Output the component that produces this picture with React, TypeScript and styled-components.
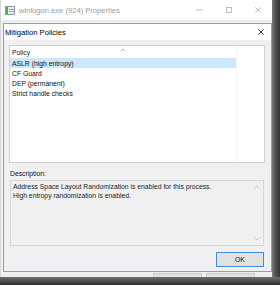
import React from "react";
import styled, { createGlobalStyle } from "styled-components";

const Global = createGlobalStyle`
  html, body { margin: 0; padding: 0; }
  body { font-family: "Liberation Sans", Arial, sans-serif; }
  * { box-sizing: border-box; }
`;

const Screen = styled.div`
  width: 280px;
  height: 285px;
  overflow: hidden;
  background: linear-gradient(to right, #7a7a7a 0px, #7a7a7a 272px, #555 275px, #333 280px);
`;

const BottomShade = styled.div`
  height: 8px;
  background: linear-gradient(to bottom, #707070, #2a2a2a);
`;

const OuterWindow = styled.div`
  width: 272px;
  height: 277px;
  background: #f0f0f0;
  display: flex;
  flex-direction: column;
  overflow: hidden;
  border-left: 1px solid #d8d8d8;
`;

const OuterTitleBar = styled.div`
  height: 21px;
  flex: none;
  background: #fff;
  display: flex;
  align-items: center;
  padding-left: 4px;
  border-bottom: 1px solid #e6e6e6;
`;

const OuterTitle = styled.span`
  font-size: 7.6px;
  color: #9c9c9c;
  margin-left: 4px;
  flex: 1;
  white-space: nowrap;
`;

const CaptionButtons = styled.div`
  display: flex;
  align-items: center;
  height: 100%;
`;

const CaptionButton = styled.div`
  width: 29px;
  height: 100%;
  display: flex;
  align-items: center;
  justify-content: center;
`;

const OuterBody = styled.div`
  flex: 1;
  display: flex;
  flex-direction: column;
  padding: 2px 0 0 2px;
`;

const Dialog = styled.div`
  width: 269px;
  height: 249px;
  flex: none;
  border: 1px solid #6fa7e0;
  background: #f0f0f0;
  display: flex;
  flex-direction: column;
`;

const DialogTitleBar = styled.div`
  height: 16px;
  flex: none;
  background: #fff;
  display: flex;
  align-items: center;
  justify-content: space-between;
  padding: 0 7px 0 1px;
`;

const DialogTitle = styled.span`
  font-size: 7.6px;
  color: #000;
  white-space: nowrap;
`;

const DialogBody = styled.div`
  flex: 1;
  display: flex;
  flex-direction: column;
  padding: 5px 6px 7px 5px;
`;

const ListBox = styled.div`
  height: 118px;
  flex: none;
  background: #fff;
  border: 1px solid #cfcfcf;
  display: flex;
  flex-direction: column;
  position: relative;
`;

const ColumnLine = styled.div`
  position: absolute;
  top: 0;
  bottom: 0;
  left: 226px;
  width: 1px;
  background: #f4f4f4;
`;

const HeaderRow = styled.div`
  height: 12px;
  width: 226px;
  display: flex;
  align-items: center;
  padding-left: 2px;
  position: relative;
`;

const HeaderText = styled.span`
  font-size: 6.8px;
  color: #1a1a1a;
`;

const SortArrow = styled.svg`
  position: absolute;
  left: 110px;
  top: 2px;
`;

const Row = styled.div<{ $selected?: boolean }>`
  height: 10px;
  width: 226px;
  display: flex;
  align-items: center;
  padding-left: 2px;
  background: ${(p) => (p.$selected ? "#cce8ff" : "transparent")};
`;

const RowText = styled.span`
  font-size: 6.8px;
  color: #111;
  white-space: nowrap;
`;

const Label = styled.div`
  margin-top: 3px;
  height: 14px;
  display: flex;
  align-items: center;
  padding-left: 1px;
  font-size: 6.8px;
  color: #111;
`;

const DescBox = styled.div`
  height: 66px;
  flex: none;
  margin-left: 1px;
  margin-right: 1px;
  border: 1px solid #d6d6d6;
  background: #f0f0f0;
  display: flex;
`;

const DescText = styled.div`
  flex: 1;
  padding: 1px 0 0 2px;
  font-size: 6.8px;
  line-height: 9px;
  color: #222;
`;

const ScrollBar = styled.div`
  width: 12px;
  display: flex;
  flex-direction: column;
  justify-content: space-between;
  align-items: center;
  padding: 4px 0 4px;
`;

const ButtonRow = styled.div`
  display: flex;
  justify-content: flex-end;
  margin-top: 6px;
  padding-right: 1px;
`;

const OkButton = styled.div`
  width: 48px;
  height: 15px;
  border: 1px solid #3c8fdc;
  background: #e1e1e1;
  display: flex;
  align-items: center;
  justify-content: center;
  font-size: 6.8px;
  color: #111;
`;

const HiddenButtons = styled.div`
  display: flex;
  gap: 4px;
  margin-top: 1px;
  padding-left: 150px;
`;

const HiddenButton = styled.div`
  width: 49px;
  height: 10px;
  background: #e1e1e1;
  border: 1px solid #cdcdcd;
`;

const Chevron = ({ up }: { up: boolean }) => (
  <svg width="6" height="4" viewBox="0 0 6 4">
    <path
      d={up ? "M0.5 3.5 L3 1 L5.5 3.5" : "M0.5 0.5 L3 3 L5.5 0.5"}
      fill="none"
      stroke="#c2c2c2"
      strokeWidth="0.9"
    />
  </svg>
);

const rows = ["ASLR (high entropy)", "CF Guard", "DEP (permanent)", "Strict handle checks"];

export default function App() {
  return (
    <>
      <Global />
      <Screen>
        <OuterWindow>
          <OuterTitleBar>
            <svg width="10" height="9" viewBox="0 0 10 9">
              <rect x="0.5" y="0.5" width="9" height="8" fill="#e8ecef" stroke="#8c98a4" />
              <rect x="1" y="1" width="2" height="7" fill="#4caf50" />
              <rect x="4" y="3" width="5" height="1" fill="#9aa6b2" />
              <rect x="4" y="5" width="5" height="1" fill="#9aa6b2" />
            </svg>
            <OuterTitle>winlogon.exe (924) Properties</OuterTitle>
            <CaptionButtons>
              <CaptionButton>
                <svg width="7" height="2" viewBox="0 0 7 2">
                  <rect x="0" y="0.5" width="7" height="0.8" fill="#b0b0b0" />
                </svg>
              </CaptionButton>
              <CaptionButton>
                <svg width="6" height="6" viewBox="0 0 6 6">
                  <rect x="0.5" y="0.5" width="5" height="5" fill="none" stroke="#b0b0b0" strokeWidth="0.8" />
                </svg>
              </CaptionButton>
              <CaptionButton>
                <svg width="6" height="6" viewBox="0 0 6 6">
                  <path d="M0.3 0.3 L5.7 5.7 M5.7 0.3 L0.3 5.7" stroke="#b0b0b0" strokeWidth="0.8" />
                </svg>
              </CaptionButton>
            </CaptionButtons>
          </OuterTitleBar>
          <OuterBody>
            <Dialog>
              <DialogTitleBar>
                <DialogTitle>Mitigation Policies</DialogTitle>
                <svg width="6" height="6" viewBox="0 0 6 6">
                  <path d="M0.3 0.3 L5.7 5.7 M5.7 0.3 L0.3 5.7" stroke="#222" strokeWidth="0.9" />
                </svg>
              </DialogTitleBar>
              <DialogBody>
                <ListBox>
                  <ColumnLine />
                  <HeaderRow>
                    <HeaderText>Policy</HeaderText>
                    <SortArrow width="6" height="4" viewBox="0 0 6 4">
                      <path d="M0.5 3.5 L3 1 L5.5 3.5" fill="none" stroke="#a8a8a8" strokeWidth="0.8" />
                    </SortArrow>
                  </HeaderRow>
                  {rows.map((r, i) => (
                    <Row key={r} $selected={i === 0}>
                      <RowText>{r}</RowText>
                    </Row>
                  ))}
                </ListBox>
                <Label>Description:</Label>
                <DescBox>
                  <DescText>
                    Address Space Layout Randomization is enabled for this process.
                    <br />
                    High entropy randomization is enabled.
                  </DescText>
                  <ScrollBar>
                    <Chevron up />
                    <Chevron up={false} />
                  </ScrollBar>
                </DescBox>
                <ButtonRow>
                  <OkButton>OK</OkButton>
                </ButtonRow>
              </DialogBody>
            </Dialog>
            <HiddenButtons>
              <HiddenButton />
              <HiddenButton />
            </HiddenButtons>
          </OuterBody>
        </OuterWindow>
        <BottomShade />
      </Screen>
    </>
  );
}
